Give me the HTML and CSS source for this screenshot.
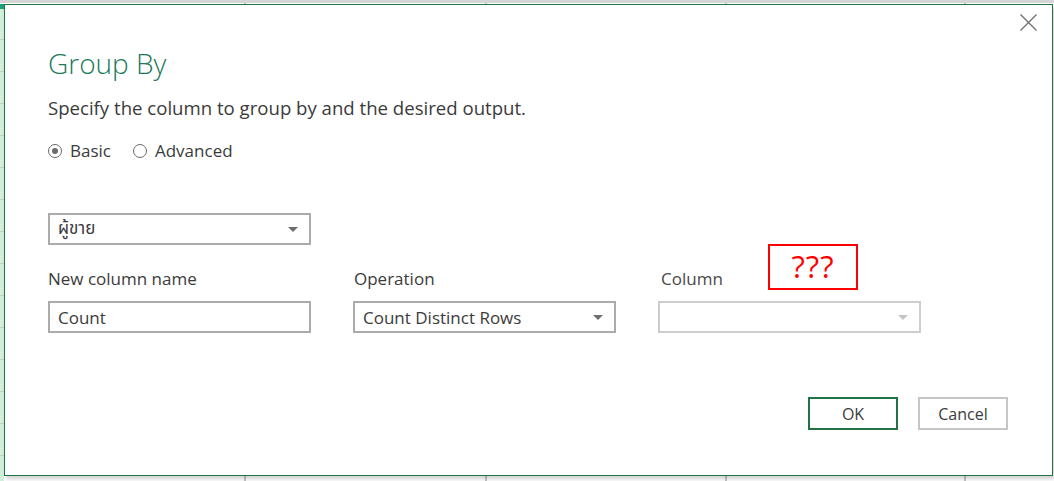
FILE: index.html
```html
<!DOCTYPE html>
<html lang="en">
<head>
<meta charset="utf-8">
<title>Group By</title>
<link rel="stylesheet" href="styles.css">
</head>
<body>
<div class="dialog">
  <button class="close" aria-label="Close">
    <svg width="17" height="17" viewBox="0 0 17 17"><path d="M0.5 0.5 L16.5 16.5 M16.5 0.5 L0.5 16.5" stroke="#6e6e6e" stroke-width="1.3" fill="none"/></svg>
  </button>
  <h1 class="title">Group By</h1>
  <p class="desc">Specify the column to group by and the desired output.</p>
  <div class="radios">
    <label class="radio"><span class="dot checked"></span>Basic</label>
    <label class="radio"><span class="dot"></span>Advanced</label>
  </div>
  <div class="select group-select"><span class="val">ผู้ขาย</span><span class="arrow"></span></div>
  <div class="fields">
    <div class="field">
      <div class="label">New column name</div>
      <div class="input"><span class="val">Count</span></div>
    </div>
    <div class="field">
      <div class="label">Operation</div>
      <div class="select"><span class="val">Count Distinct Rows</span><span class="arrow"></span></div>
    </div>
    <div class="field">
      <div class="label">Column</div>
      <div class="select disabled"><span class="val"></span><span class="arrow"></span></div>
    </div>
  </div>
  <div class="note">???</div>
  <div class="buttons">
    <button class="btn primary">OK</button>
    <button class="btn">Cancel</button>
  </div>
</div>
</body>
</html>
```
FILE: styles.css
```css
html, body {
  margin: 0;
  padding: 0;
}
body {
  width: 1054px;
  height: 481px;
  overflow: hidden;
  box-sizing: border-box;
  padding: 4px 1px 5px 4px;
  font-family: "Open Sans", "Noto Sans", "Noto Sans Thai", "Liberation Sans", sans-serif;
  color: #3b3b3b;
  background:
    linear-gradient(#1aa07a, #1aa07a) 0 4px / 4px 5px no-repeat,
    linear-gradient(#d5d5d5, #d5d5d5) 0 0 / 100% 3px no-repeat,
    repeating-linear-gradient(to bottom, #d2efdc 0 31px, #c3cfc7 31px 32px) 0 8px / 4px 100% no-repeat,
    linear-gradient(to right,
      transparent 244px, #c4c4c4 244px 246px,
      transparent 246px 485px, #c4c4c4 485px 487px,
      transparent 487px 725px, #c4c4c4 725px 727px,
      transparent 727px 964px, #c4c4c4 964px 966px,
      transparent 966px) 0 0 / 100% 100% no-repeat,
    #ffffff;
}
.dialog {
  position: relative;
  box-sizing: border-box;
  width: 1049px;
  height: 472px;
  background: #ffffff;
  border: 1px solid #217346;
  box-shadow: 2px 3px 4px rgba(0, 0, 0, 0.18);
  padding: 0 44px 0 43px;
  display: flex;
  flex-direction: column;
  align-items: flex-start;
}
.close {
  position: absolute;
  top: 9px;
  right: 15px;
  width: 17px;
  height: 17px;
  padding: 0;
  border: 0;
  background: none;
  display: flex;
}
.title {
  margin: 40px 0 0;
  font-size: 28px;
  line-height: 36px;
  font-weight: 300;
  color: #217a5c;
}
.desc {
  margin: 15px 0 0;
  font-size: 18.6px;
  line-height: 24px;
}
.radios {
  margin-top: 19px;
  display: flex;
  gap: 22px;
  font-size: 17px;
  line-height: 24px;
}
.radio {
  display: flex;
  align-items: center;
  gap: 8px;
}
.dot {
  box-sizing: border-box;
  width: 14px;
  height: 14px;
  border: 1px solid #6b6b6b;
  border-radius: 50%;
  display: flex;
  align-items: center;
  justify-content: center;
}
.dot.checked::after {
  content: "";
  width: 6px;
  height: 6px;
  border-radius: 50%;
  background: #6b6b6b;
}
.select, .input {
  box-sizing: border-box;
  width: 263px;
  height: 32px;
  border: 2px solid #ababab;
  padding: 0 11px 0 8px;
  display: flex;
  align-items: center;
  justify-content: space-between;
  font-size: 17px;
}
.group-select {
  margin-top: 50px;
}
.arrow {
  width: 0;
  height: 0;
  border-left: 5px solid transparent;
  border-right: 5px solid transparent;
  border-top: 5px solid #6e6e6e;
}
.select.disabled {
  border-color: #cdcdcd;
}
.select.disabled .arrow {
  border-top-color: #c4c4c4;
}
.fields {
  margin-top: 22px;
  display: grid;
  grid-template-columns: repeat(3, 263px);
  column-gap: 42px;
}
.field {
  display: flex;
  flex-direction: column;
  gap: 10px;
}
.label {
  font-size: 17px;
  line-height: 24px;
}
.field:nth-child(2) .label { padding-left: 1px; }
.field:nth-child(3) .label { padding-left: 3px; color: #4a4a4a; }
.note {
  position: absolute;
  left: 763px;
  top: 239px;
  box-sizing: border-box;
  width: 90px;
  height: 46px;
  border: 2px solid #ff0000;
  color: #ff0000;
  font-size: 31px;
  line-height: 40px;
  letter-spacing: 1px;
  text-align: center;
}
.buttons {
  margin-top: 64px;
  align-self: flex-end;
  display: flex;
  gap: 20px;
}
.btn {
  box-sizing: border-box;
  width: 90px;
  height: 33px;
  background: #ffffff;
  border: 2px solid #c6c6c6;
  font-family: inherit;
  font-size: 16px;
  color: #3b3b3b;
  padding: 0;
}
.btn.primary {
  border-color: #217346;
}
```
